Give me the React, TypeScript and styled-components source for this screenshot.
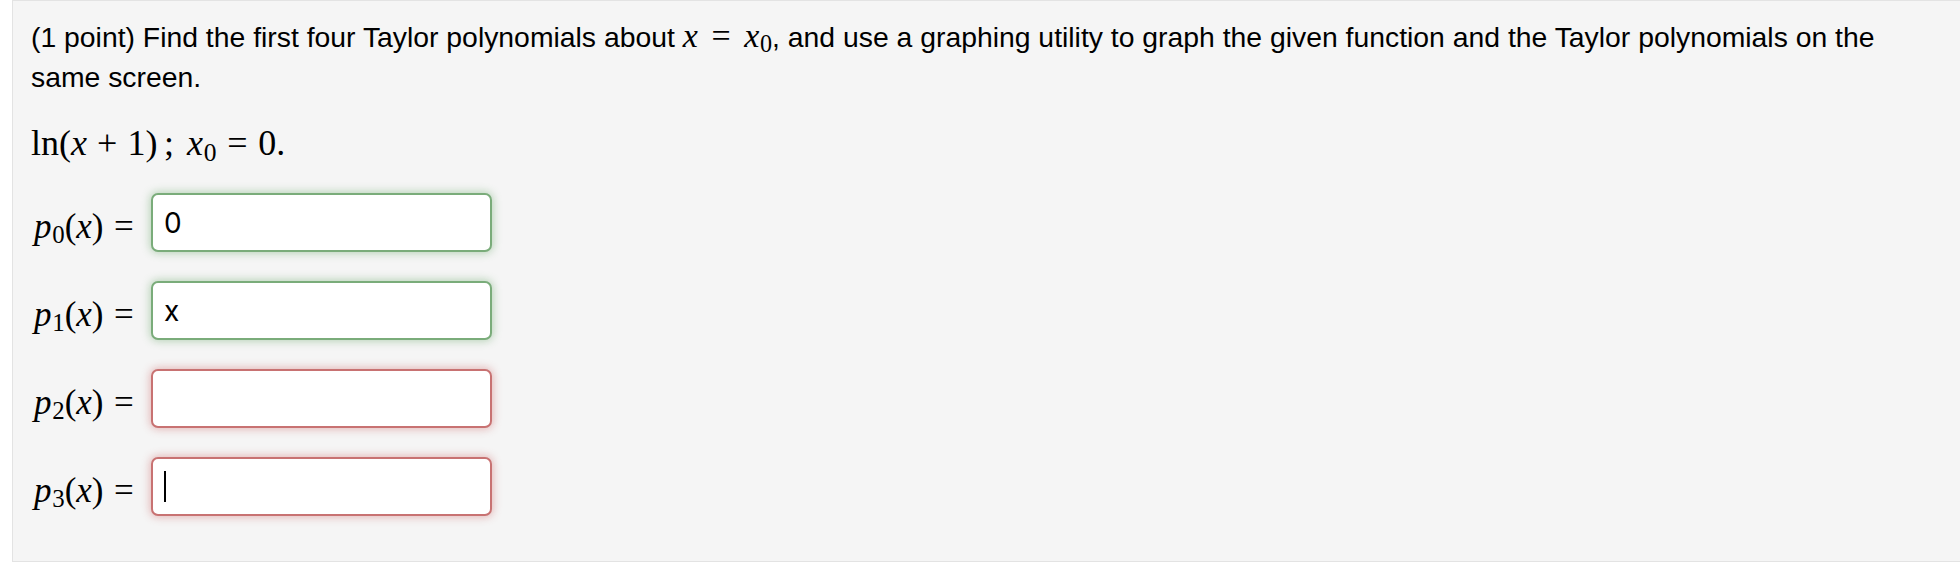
import React from "react";
import styled, { createGlobalStyle } from "styled-components";

const Global = createGlobalStyle`
  html, body { margin: 0; padding: 0; background: #ffffff; }
  body { font-family: "Liberation Sans", Arial, sans-serif; color: #000; }
`;

const Panel = styled.section`
  box-sizing: border-box;
  margin-left: 12px;
  height: 562px;
  background: #f5f5f5;
  border: 1px solid #e3e3e3;
  border-right: none;
  padding: 15px 30px 0 18px;
  overflow: hidden;
`;

const Prompt = styled.p`
  margin: 0;
  font-size: 28.35px;
  line-height: 40px;
`;

const MathLine = styled.p`
  margin: 26px 0 0 0;
  font-family: "Liberation Serif", "Times New Roman", serif;
  font-size: 36px;
  line-height: 40px;
`;

const M = styled.span<{ $size?: number }>`
  font-family: "Liberation Serif", "Times New Roman", serif;
  font-size: ${(p) => (p.$size ? `${p.$size}px` : "inherit")};
  white-space: nowrap;
`;

const I = styled.span`
  font-style: italic;
`;

const Op = styled.span<{ $space?: number; $after?: number }>`
  display: inline-block;
  margin: 0 ${(p) => (p.$after ?? p.$space ?? 0.36)}em 0 ${(p) => (p.$space ?? 0.36)}em;
`;

const Sub = styled.span`
  font-size: 71%;
  vertical-align: -0.22em;
  line-height: 0;
  margin-left: 0.03em;
`;

const Rows = styled.div`
  display: flex;
  flex-direction: column;
  gap: 29px;
  margin-top: 30px;
`;

const Row = styled.div`
  display: flex;
  align-items: center;
`;

const Label = styled.span`
  font-family: "Liberation Serif", "Times New Roman", serif;
  font-size: 35px;
  line-height: 40px;
  padding-left: 3px;
  width: 117px;
  white-space: nowrap;
  position: relative;
  top: 4px;
`;

const Field = styled.div<{ $state: "ok" | "bad" }>`
  box-sizing: border-box;
  width: 341px;
  height: 59px;
  display: flex;
  align-items: center;
  padding-left: 11px;
  background: #ffffff;
  border: 2px solid ${(p) => (p.$state === "ok" ? "#7aac7a" : "#c87272")};
  border-radius: 7px;
  box-shadow: 0 0 9px 1px
    ${(p) => (p.$state === "ok" ? "rgba(100, 165, 100, 0.45)" : "rgba(205, 100, 100, 0.45)")};
  font-family: Inter, "Liberation Sans", sans-serif;
  font-size: 28px;
  color: #000;
`;

const Caret = styled.span`
  display: inline-block;
  width: 2px;
  height: 31px;
  background: #000;
`;

const rows: { n: string; value: string; state: "ok" | "bad"; caret?: boolean }[] = [
  { n: "0", value: "0", state: "ok" },
  { n: "1", value: "x", state: "ok" },
  { n: "2", value: "", state: "bad" },
  { n: "3", value: "", state: "bad", caret: true },
];

export default function App() {
  return (
    <>
      <Global />
      <Panel>
        <Prompt>
          (1 point) Find the first four Taylor polynomials about{" "}
          <M $size={34}>
            <I>x</I>
            <Op $space={0.4}>=</Op>
            <I>x</I>
            <Sub>0</Sub>
          </M>
          , and use a graphing utility to graph the given function and the Taylor polynomials on the
          same screen.
        </Prompt>
        <MathLine>
          <M>
            ln(<I>x</I>
            <Op $space={0.28}>+</Op>1)<Op $space={0.18} $after={0.36}>;</Op>
            <I>x</I>
            <Sub>0</Sub>
            <Op $space={0.3}>=</Op>0.
          </M>
        </MathLine>
        <Rows>
          {rows.map((r) => (
            <Row key={r.n}>
              <Label>
                <I>p</I>
                <Sub>{r.n}</Sub>(<I>x</I>)<Op $space={0.3}>=</Op>
              </Label>
              <Field $state={r.state}>
                {r.value}
                {r.caret && <Caret />}
              </Field>
            </Row>
          ))}
        </Rows>
      </Panel>
    </>
  );
}
